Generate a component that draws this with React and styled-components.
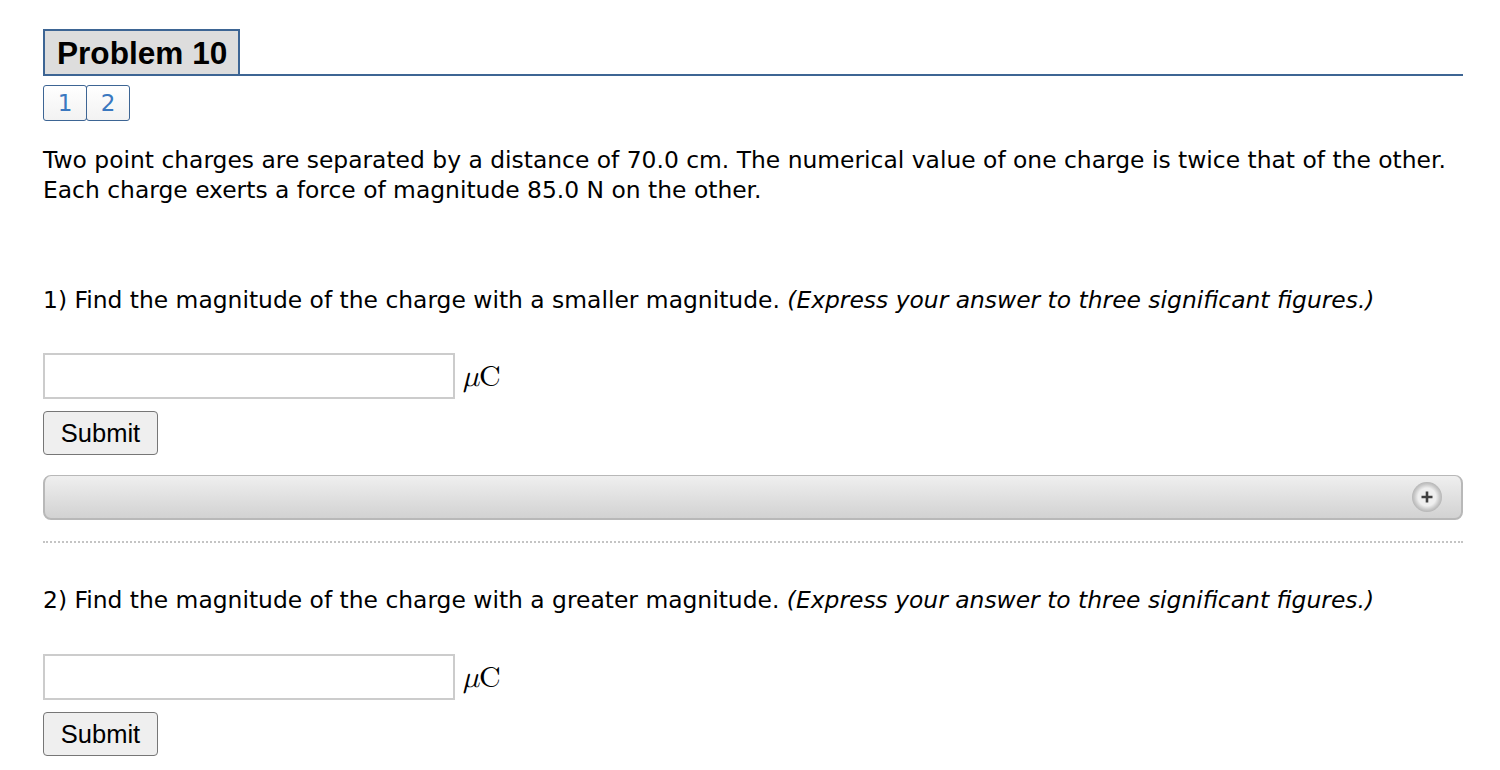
import styled, { createGlobalStyle } from "styled-components"

const Global = createGlobalStyle`
	body {
		margin: 0;
		background: #ffffff;
		font-family: "DejaVu Sans", "Open Sans", sans-serif;
		color: #000;
	}
`

const Page = styled.div`
	width: 1420px;
	padding: 29px 0 0 43px;
`

const Header = styled.div`
	display: flex;
	align-items: flex-end;
	border-bottom: 2px solid #3d6594;
`

const Title = styled.h1`
	margin: 0 0 -2px 0;
	height: 43px;
	padding: 0 11px 0 12px;
	background: #dddddd;
	border: 2px solid #3d6594;
	font-family: "Liberation Sans", Arial, sans-serif;
	font-size: 31.6px;
	font-weight: bold;
	line-height: 45px;
`

const Tabs = styled.div`
	display: flex;
	margin-top: 9px;
`

const Tab = styled.button`
	width: 44px;
	height: 36px;
	margin-left: ${(p) => (p.$first ? "0" : "-1px")};
	padding: 0;
	border: 1px solid #3d6594;
	border-radius: 3px;
	background: linear-gradient(#ffffff, #f2f2f2);
	color: #3a78c0;
	font-family: "DejaVu Sans", sans-serif;
	font-size: 23px;
	line-height: 34px;
`

const Para = styled.p`
	margin: 24px 0 0 0;
	font-size: 23.4px;
	line-height: 30px;
`

const Question = styled.p`
	margin: ${(p) => p.$top}px 0 0 0;
	font-size: 23.4px;
	line-height: 30px;
`

const Hint = styled.em`
	font-style: italic;
`

const AnswerRow = styled.div`
	display: flex;
	align-items: center;
	margin-top: ${(p) => p.$top}px;
	gap: 8px;
`

const Input = styled.input`
	box-sizing: border-box;
	width: 412px;
	height: 46px;
	border: 2px solid #cccccc;
	background: #fff;
	font-size: 20px;
	outline: none;
`

const Unit = styled.span`
	font-family: "Latin Modern Math", "DejaVu Serif", "Liberation Serif", serif;
	font-size: 30px;
	margin-top: 2px;
	& i {
		font-style: italic;
	}
`

const SubmitButton = styled.button`
	display: block;
	box-sizing: border-box;
	margin-top: 12px;
	width: 115px;
	height: 44px;
	border: 1px solid #767676;
	border-radius: 4px;
	background: #efefef;
	font-family: "Liberation Sans", Arial, sans-serif;
	font-size: 25.5px;
	color: #000;
`

const HintBar = styled.div`
	display: flex;
	justify-content: flex-end;
	align-items: center;
	box-sizing: border-box;
	margin-top: 20px;
	height: 45px;
	padding-right: 19px;
	border: 2px solid #b8b8b8;
	border-top-width: 1px;
	border-radius: 8px;
	background: linear-gradient(#efefef, #d2d2d2);
`

const PlusIcon = styled.div`
	width: 30px;
	height: 30px;
	border-radius: 50%;
	background: radial-gradient(circle, #efefef 42%, #c8c8c8 60%, #a2a2a2 82%, #c8c8c8 100%);
	display: flex;
	align-items: center;
	justify-content: center;
`

const Divider = styled.div`
	margin-top: 21px;
	border-top: 2px dotted #c4c4c4;
`

const Answer = ({ top }) => (
	<>
		<AnswerRow $top={top}>
			<Input type="text" />
			<Unit>
				<i>μ</i>C
			</Unit>
		</AnswerRow>
		<SubmitButton>Submit</SubmitButton>
	</>
)

const App = () => {
	return (
		<Page>
			<Global />
			<Header>
				<Title>Problem 10</Title>
			</Header>
			<Tabs>
				<Tab $first>1</Tab>
				<Tab>2</Tab>
			</Tabs>
			<Para>
				Two point charges are separated by a distance of 70.0 cm. The numerical value of one charge is twice that of the other.
				<br />
				Each charge exerts a force of magnitude 85.0 N on the other.
			</Para>
			<Question $top={80}>
				1) Find the magnitude of the charge with a smaller magnitude. <Hint>(Express your answer to three significant figures.)</Hint>
			</Question>
			<Answer top={38} />
			<HintBar>
				<PlusIcon>
					<svg width="16" height="16" viewBox="0 0 16 16">
						<path d="M8 2.5v11M2.5 8h11" stroke="#404040" strokeWidth="2.6" />
					</svg>
				</PlusIcon>
			</HintBar>
			<Divider />
			<Question $top={42}>
				2) Find the magnitude of the charge with a greater magnitude. <Hint>(Express your answer to three significant figures.)</Hint>
			</Question>
			<Answer top={39} />
		</Page>
	)
}

export default App
